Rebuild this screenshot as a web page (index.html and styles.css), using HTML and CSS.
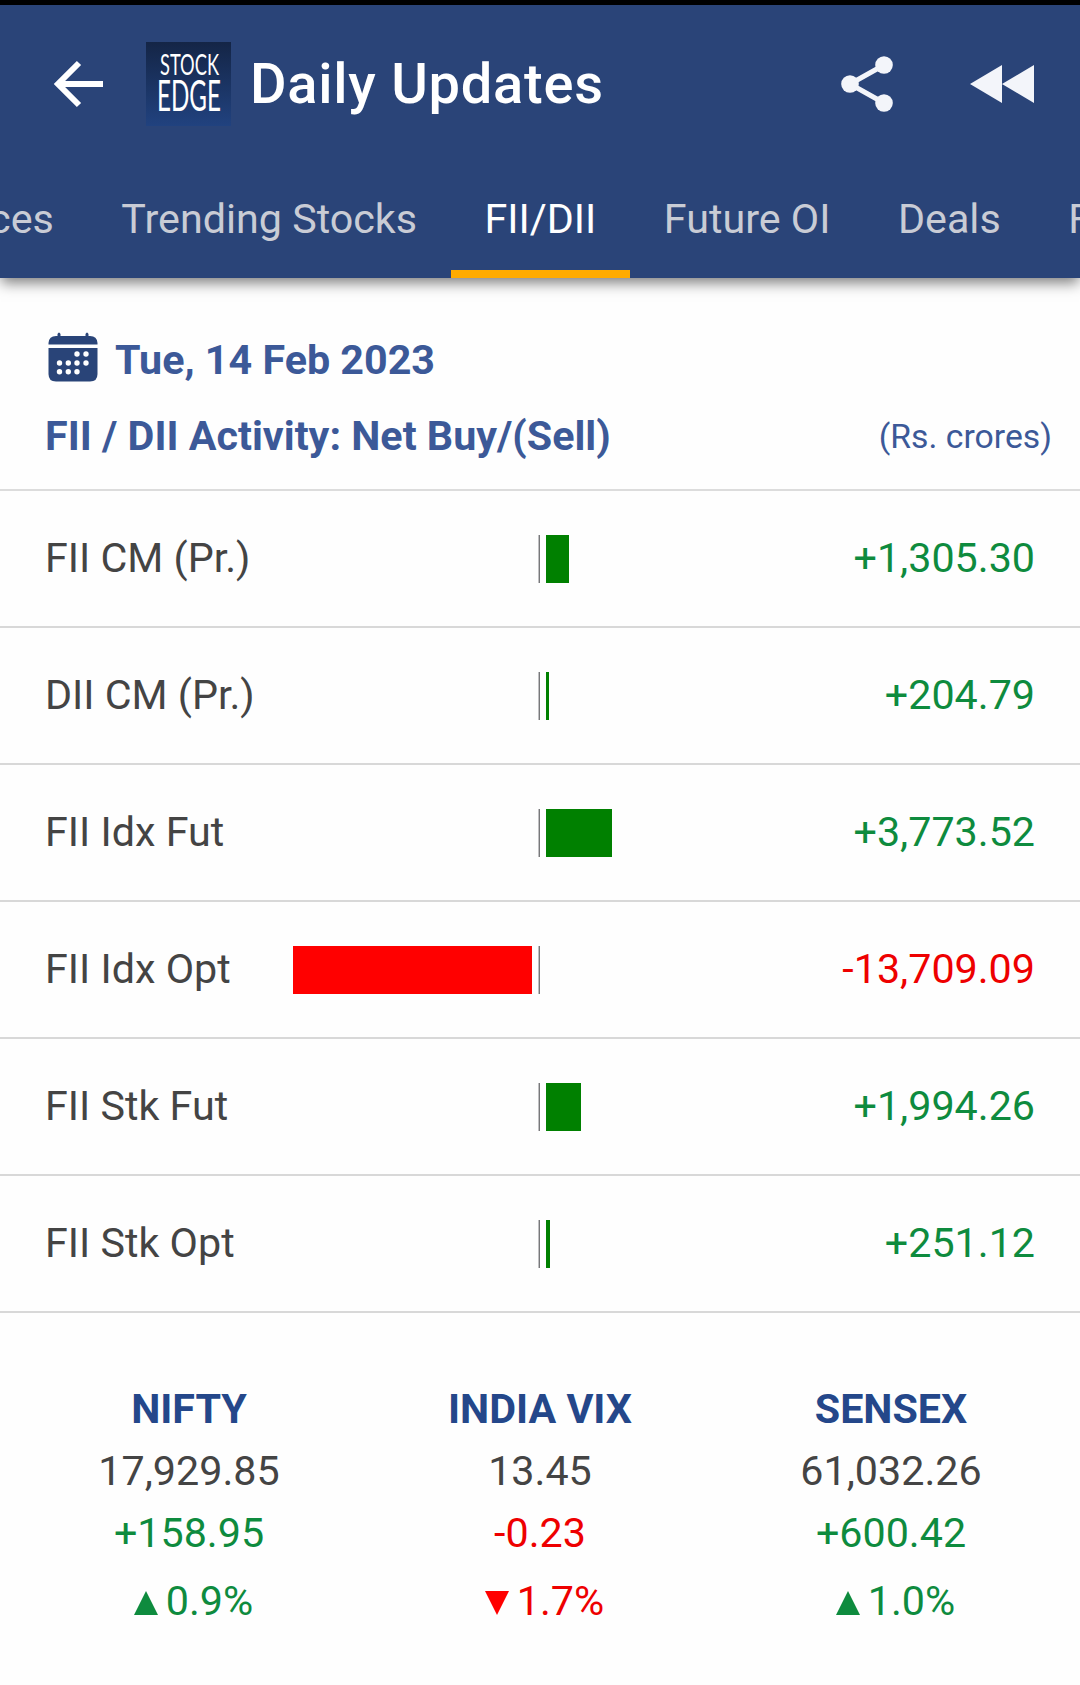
FILE: index.html
```html
<!DOCTYPE html>
<html lang="en">
<head>
    <meta charset="UTF-8">
    <meta name="viewport" content="width=device-width, initial-scale=1.0">
    <title>Daily Updates</title>
    <link rel="stylesheet" href="styles.css">
</head>
<body>
    <header class="header">
        <div class="toolbar">
            <svg class="back" viewBox="0 0 50 48" width="50" height="48">
                <path d="M26 3 L5 24 L26 45 M4 24 H50" fill="none" stroke="#fff" stroke-width="6"/>
            </svg>
            <svg class="logo" viewBox="0 0 85 84" width="85" height="84">
                <defs>
                    <linearGradient id="logoBg" x1="0" y1="0" x2="0" y2="1">
                        <stop offset="0" stop-color="#142546"/>
                        <stop offset="1" stop-color="#21427f"/>
                    </linearGradient>
                </defs>
                <rect width="85" height="84" fill="url(#logoBg)"/>
                <text class="logo-top" x="14" y="32.5" textLength="59" lengthAdjust="spacingAndGlyphs">STOCK</text>
                <text class="logo-bottom" x="11" y="69" textLength="64" lengthAdjust="spacingAndGlyphs">EDGE</text>
            </svg>
            <h1>Daily Updates</h1>
            <svg class="share" viewBox="0 0 52 56" width="52" height="56">
                <path d="M43 9 L9 28 L43 47" fill="none" stroke="#f3f5fa" stroke-width="5"/>
                <circle cx="9" cy="28" r="8.8" fill="#f3f5fa"/>
                <circle cx="43" cy="9" r="8.8" fill="#f3f5fa"/>
                <circle cx="43" cy="47" r="8.8" fill="#f3f5fa"/>
            </svg>
            <svg class="rewind" viewBox="0 0 64 40" width="64" height="40">
                <path d="M32 1 V39 L0 20 Z M64 1 V39 L32 20 Z" fill="#f3f5fa"/>
            </svg>
        </div>
        <nav class="tabs">
            <a class="tab">Indices</a>
            <a class="tab">Trending Stocks</a>
            <a class="tab active">FII/DII</a>
            <a class="tab">Future OI</a>
            <a class="tab">Deals</a>
            <a class="tab">F</a>
        </nav>
    </header>

    <main>
        <section class="intro">
            <div class="date">
                <svg viewBox="0 0 50 50" width="50" height="50">
                    <path d="M0.5 12.5 V11 Q1 4 8 4 H9.5 V2 Q11 -1 12.5 2 V4 H37.5 V2 Q39 -1 40.5 2 V4 H42 Q49 4 49.5 11 V12.5 Z" fill="#294478"/>
                    <path d="M0.5 16 H49.5 V42 Q49.5 49.5 42 49.5 H8 Q0.5 49.5 0.5 42 Z" fill="#294478"/>
                    <g fill="#fff">
                        <circle cx="29" cy="22" r="2.7"/>
                        <circle cx="38" cy="22" r="2.7"/>
                        <circle cx="11.5" cy="31" r="2.7"/>
                        <circle cx="20.3" cy="31" r="2.7"/>
                        <circle cx="29" cy="31" r="2.7"/>
                        <circle cx="38" cy="31" r="2.7"/>
                        <circle cx="11.5" cy="39.7" r="2.7"/>
                        <circle cx="20.3" cy="39.7" r="2.7"/>
                        <circle cx="29" cy="39.7" r="2.7"/>
                    </g>
                </svg>
                <span>Tue, 14 Feb 2023</span>
            </div>
            <div class="heading">
                <h2>FII / DII Activity: Net Buy/(Sell)</h2>
                <span class="unit">(Rs. crores)</span>
            </div>
        </section>

        <section class="activity">
            <div class="row">
                <span class="name">FII CM (Pr.)</span>
                <div class="chart"><div class="neg"></div><div class="axis"></div><div class="pos"><div class="bar" style="width: 23px"></div></div></div>
                <span class="amount up">+1,305.30</span>
            </div>
            <div class="row">
                <span class="name">DII CM (Pr.)</span>
                <div class="chart"><div class="neg"></div><div class="axis"></div><div class="pos"><div class="bar" style="width: 3px"></div></div></div>
                <span class="amount up">+204.79</span>
            </div>
            <div class="row">
                <span class="name">FII Idx Fut</span>
                <div class="chart"><div class="neg"></div><div class="axis"></div><div class="pos"><div class="bar" style="width: 66px"></div></div></div>
                <span class="amount up">+3,773.52</span>
            </div>
            <div class="row">
                <span class="name">FII Idx Opt</span>
                <div class="chart"><div class="neg"><div class="bar" style="width: 239px"></div></div><div class="axis"></div><div class="pos"></div></div>
                <span class="amount down">-13,709.09</span>
            </div>
            <div class="row">
                <span class="name">FII Stk Fut</span>
                <div class="chart"><div class="neg"></div><div class="axis"></div><div class="pos"><div class="bar" style="width: 35px"></div></div></div>
                <span class="amount up">+1,994.26</span>
            </div>
            <div class="row">
                <span class="name">FII Stk Opt</span>
                <div class="chart"><div class="neg"></div><div class="axis"></div><div class="pos"><div class="bar" style="width: 4px"></div></div></div>
                <span class="amount up">+251.12</span>
            </div>
        </section>

        <section class="indices">
            <div class="index">
                <h3>NIFTY</h3>
                <p>17,929.85</p>
                <p class="up">+158.95</p>
                <p class="percent up"><svg viewBox="0 0 24 24" width="24" height="24"><path d="M12 0 L24 24 H0 Z" fill="#0e8b3e"/></svg>0.9%</p>
            </div>
            <div class="index">
                <h3>INDIA VIX</h3>
                <p>13.45</p>
                <p class="down">-0.23</p>
                <p class="percent down"><svg viewBox="0 0 24 24" width="24" height="24"><path d="M0 0 H24 L12 24 Z" fill="#ff0000"/></svg>1.7%</p>
            </div>
            <div class="index">
                <h3>SENSEX</h3>
                <p>61,032.26</p>
                <p class="up">+600.42</p>
                <p class="percent up"><svg viewBox="0 0 24 24" width="24" height="24"><path d="M12 0 L24 24 H0 Z" fill="#0e8b3e"/></svg>1.0%</p>
            </div>
        </section>
    </main>
</body>
</html>
```
FILE: styles.css
```css
* {
    box-sizing: border-box;
}

body {
    margin: 0;
    min-height: 1685px;
    background-color: #fefefe;
    color: #444444;
    font-family: Roboto, "Liberation Sans", sans-serif;
    font-size: 41.25px;
    overflow-x: hidden;
}

h1, h2, h3, p {
    margin: 0;
}

.header {
    height: 278px;
    background-color: #2a4478;
    border-top: 5px solid #000000;
    box-shadow: 0 6px 13px -1px rgba(0, 0, 0, 0.5);
}

.toolbar {
    display: flex;
    align-items: center;
    height: 157px;
    padding: 0 46px 0 53px;
}

.logo {
    margin-left: 43px;
}

.logo text {
    font-family: Lato, sans-serif;
    fill: #ffffff;
}

.logo-top {
    font-size: 28px;
}

.logo-bottom {
    font-size: 42px;
}

h1 {
    flex: 1;
    margin-left: 19px;
    color: #ffffff;
    font-size: 56px;
    font-weight: 500;
    line-height: 70px;
    letter-spacing: 0.75px;
}

.rewind {
    margin-left: 77px;
}

.tabs {
    display: flex;
    height: 116px;
    margin-left: -112px;
    overflow: hidden;
}

.tab {
    flex: none;
    padding: 30px 33.75px 0;
    border-bottom: 8px solid transparent;
    color: #c9ccd5;
    line-height: 54px;
}

.tab.active {
    color: #ffffff;
    border-bottom-color: #ffab00;
}

.intro {
    height: 213px;
    padding: 51px 28px 0 45px;
    border-bottom: 2px solid #dcdcdc;
    color: #3c5998;
}

.date {
    display: flex;
    align-items: center;
    gap: 17px;
    height: 56px;
    padding-left: 3px;
    font-weight: 700;
}

.date span {
    padding-top: 5px;
}

.heading {
    display: flex;
    justify-content: space-between;
    align-items: center;
    height: 58px;
    margin-top: 22px;
}

h2 {
    font-size: 41.25px;
    font-weight: 700;
}

.unit {
    font-size: 33.75px;
}

.row {
    display: grid;
    grid-template-columns: 247px 494px 1fr;
    align-items: center;
    height: 137px;
    padding: 0 45px;
    border-bottom: 2px solid #d8d8d8;
}

.name,
.amount {
    padding-bottom: 2px;
}

.chart {
    display: flex;
    justify-content: center;
    gap: 6px;
    height: 48px;
}

.neg,
.pos {
    display: flex;
    width: 239px;
}

.neg {
    justify-content: flex-end;
}

.neg .bar {
    background-color: #ff0000;
}

.pos .bar {
    background-color: #008000;
}

.axis {
    width: 2px;
    background-color: #77787a;
    border-left: 1px solid #c0c0c2;
}

.amount {
    text-align: right;
}

.up {
    color: #0e8b3e;
}

.down {
    color: #ee0000;
}

.indices {
    display: grid;
    grid-template-columns: 351px 351px 351px;
    justify-content: center;
    padding-top: 65px;
    text-align: center;
    line-height: 62px;
}

h3 {
    color: #24478a;
    font-size: 41.25px;
    font-weight: 700;
}

.percent {
    display: flex;
    justify-content: center;
    align-items: center;
    gap: 8px;
    margin-top: 6px;
    padding-left: 9px;
}

.percent svg {
    margin-top: 4px;
}
```
